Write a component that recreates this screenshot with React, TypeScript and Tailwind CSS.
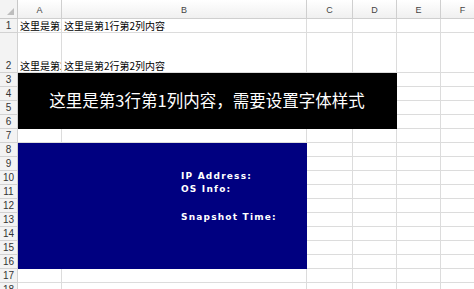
import React from 'react';

const cols = ['A', 'B', 'C', 'D', 'E', 'F'];
const cjk = '"Noto Sans CJK SC", "Noto Sans", sans-serif';

// merged cells: top-left key -> span info; covered cells are skipped
const covered = new Set<string>();
for (let r = 3; r <= 6; r++) for (let c = 0; c < 4; c++) if (!(r === 3 && c === 0)) covered.add(`${r}-${c}`);
for (let r = 8; r <= 16; r++) for (let c = 0; c < 2; c++) if (!(r === 8 && c === 0)) covered.add(`${r}-${c}`);

const Cell: React.FC<{ r: number; c: number }> = ({ r, c }) => {
  const base = 'border-r border-b border-[#dcdcdc] overflow-hidden whitespace-nowrap';

  if (r === 3 && c === 0) {
    return (
      <div
        className="col-span-4 row-span-4 bg-black border-r border-b border-black flex items-center justify-center text-white text-[16.5px]"
        style={{ fontFamily: cjk }}
      >
        这里是第3行第1列内容，需要设置字体样式
      </div>
    );
  }

  if (r === 8 && c === 0) {
    return (
      <div className="col-span-2 row-span-9 bg-[#000080] border-r border-b border-[#000080] flex flex-col pl-[163px] pt-[27px] text-white font-bold text-[9px] tracking-[1.2px] font-['DejaVu_Sans',sans-serif]">
        <div className="h-[13px] flex items-center">IP Address:</div>
        <div className="h-[13px] flex items-center">OS Info:</div>
        <div className="h-[13px] flex items-center mt-[15px]">Snapshot Time:</div>
      </div>
    );
  }

  if ((r === 1 || r === 2) && c < 2) {
    const text = `这里是第${r}行第${c + 1}列内容`;
    return (
      <div
        className={`${base} flex ${r === 2 ? 'items-end' : 'items-center'} pl-[2px] text-[10px] leading-[13px] text-black`}
        style={{ fontFamily: cjk }}
      >
        {text}
      </div>
    );
  }

  return <div className={base} />;
};

export default function App() {
  const rows = Array.from({ length: 18 }, (_, i) => i + 1);

  return (
    <div className="w-[474px] h-[289px] overflow-hidden bg-white">
      <div className="grid grid-cols-[18px_44px_245px_46px_44px_44px_44px] grid-rows-[19px_14px_40px_repeat(16,14px)] w-max">
        {/* corner */}
        <div className="bg-[#f3f3f3] border-r border-b border-[#c8c8c8] relative">
          <div className="absolute right-[3px] bottom-[3px] w-0 h-0 border-l-[7px] border-l-transparent border-b-[7px] border-b-[#bdbdbd]" />
        </div>
        {cols.map((c) => (
          <div
            key={c}
            className="bg-gradient-to-b from-white to-[#f0f0f0] border-r border-b border-[#cfcfcf] flex items-end justify-center pb-[1px] text-[9px] text-[#444] font-['Liberation_Sans',sans-serif]"
          >
            {c}
          </div>
        ))}

        {rows.map((r) => (
          <React.Fragment key={r}>
            <div className="bg-[#f3f3f3] border-r border-b border-[#d2d2d2] flex items-end justify-center leading-[13px] text-[10px] text-[#333] font-['Liberation_Sans',sans-serif]">
              {r}
            </div>
            {cols.map((_, c) =>
              covered.has(`${r}-${c}`) ? null : <Cell key={c} r={r} c={c} />
            )}
          </React.Fragment>
        ))}
      </div>
    </div>
  );
}
